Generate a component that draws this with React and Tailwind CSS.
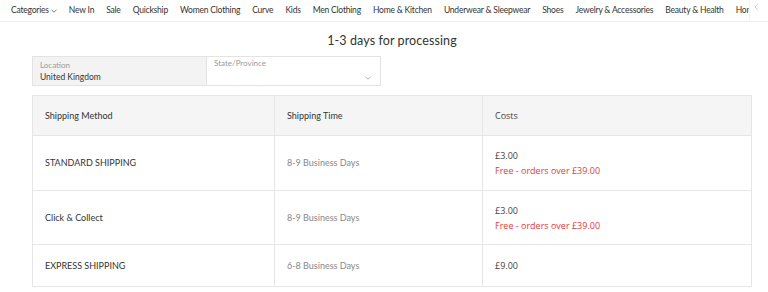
import React from "react";

const navItems = [
  "New In",
  "Sale",
  "Quickship",
  "Women Clothing",
  "Curve",
  "Kids",
  "Men Clothing",
  "Home & Kitchen",
  "Underwear & Sleepwear",
  "Shoes",
  "Jewelry & Accessories",
  "Beauty & Health",
  "Home",
];

const rows = [
  { method: "STANDARD SHIPPING", time: "8-9 Business Days", cost: "£3.00", free: true, h: "h-[55px]" },
  { method: "Click & Collect", time: "8-9 Business Days", cost: "£3.00", free: true, h: "h-[54px]" },
  { method: "EXPRESS SHIPPING", time: "6-8 Business Days", cost: "£9.00", free: false, h: "h-[41px]" },
];

export default function App() {
  return (
    <div
      className="w-[768px] h-[292px] bg-white overflow-hidden text-[#333]"
      style={{ fontFamily: "Lato, 'Noto Sans', sans-serif" }}
    >
      {/* nav */}
      <div className="relative h-[22px] border-b border-[#eeeeee] overflow-hidden">
        <div className="flex items-center h-full gap-[12px] pl-[11px] whitespace-nowrap text-[8.5px] tracking-[-0.2px] text-[#333]">
          <span className="flex items-center gap-[2px]">
            Categories
            <svg width="6" height="4" viewBox="0 0 6 4" fill="none" stroke="#555" strokeWidth="0.8">
              <path d="M0.5 0.8 L3 3.2 L5.5 0.8" />
            </svg>
          </span>
          {navItems.map((n) => (
            <span key={n}>{n}</span>
          ))}
        </div>
        <div className="absolute right-0 top-0 h-full w-[19px] bg-white border-l border-[#f3f3f3] flex items-start justify-start pl-[4px] pt-[3px]">
          <svg width="5" height="8" viewBox="0 0 5 8" fill="none" stroke="#c8c8c8" strokeWidth="0.9">
            <path d="M4 0.8 L1 4 L4 7.2" />
          </svg>
        </div>
      </div>

      {/* title */}
      <div className="mt-[9px] pl-[16px] text-center text-[12.5px] leading-[20px] text-[#333] tracking-[0.1px]">
        1-3 days for processing
      </div>

      {/* location */}
      <div className="mt-[5px] ml-[32px] flex">
        <div className="w-[175px] h-[30px] bg-[#f3f3f3] border border-[#e3e3e3] px-[7px] pt-[3px]">
          <div className="text-[8px] leading-[10px] text-[#999]">Location</div>
          <div className="text-[8.5px] leading-[15px] text-[#333]">United Kingdom</div>
        </div>
        <div className="relative w-[174px] h-[30px] bg-white border border-l-0 border-[#e3e3e3] px-[7px] pt-[1px]">
          <div className="text-[8px] leading-[10px] text-[#999]">State/Province</div>
          <svg
            className="absolute right-[9px] top-[19px]"
            width="6"
            height="4"
            viewBox="0 0 6 4"
            fill="none"
            stroke="#999"
            strokeWidth="0.8"
          >
            <path d="M0.5 0.8 L3 3.2 L5.5 0.8" />
          </svg>
        </div>
      </div>

      {/* table */}
      <div className="mt-[9px] ml-[32px] w-[720px] border border-[#e6e6e6]">
        <div className="flex h-[40px] bg-[#f5f5f5] border-b border-[#e6e6e6] text-[9px]">
          <div className="w-[242px] border-r border-[#e6e6e6] flex items-center pl-[12px] text-[#333]">
            Shipping Method
          </div>
          <div className="w-[208px] border-r border-[#e6e6e6] flex items-center pl-[12px] text-[#333]">
            Shipping Time
          </div>
          <div
            className="flex-1 flex items-center pl-[12px] text-[#444]"
            style={{ fontFamily: "'Open Sans', sans-serif" }}
          >
            Costs
          </div>
        </div>
        {rows.map((r, i) => (
          <div
            key={i}
            className={`flex ${r.h} text-[9px] ${i < rows.length - 1 ? "border-b border-[#e6e6e6]" : ""}`}
          >
            <div className="w-[242px] border-r border-[#e6e6e6] flex items-center pl-[12px] text-[#333]">
              {r.method}
            </div>
            <div className="w-[208px] border-r border-[#e6e6e6] flex items-center pl-[12px] text-[#888]">
              {r.time}
            </div>
            <div
              className="flex-1 flex flex-col justify-center pl-[12px]"
              style={{ fontFamily: "'Open Sans', sans-serif" }}
            >
              <div className="text-[#444] text-[9px] leading-[15px]">{r.cost}</div>
              {r.free && (
                <div className="text-[#e53a3a] text-[9px] leading-[15px]">Free - orders over £39.00</div>
              )}
            </div>
          </div>
        ))}
      </div>
    </div>
  );
}
